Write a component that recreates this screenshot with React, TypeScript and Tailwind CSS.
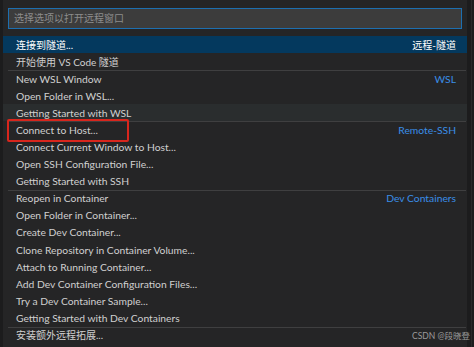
import React from "react";

type Row = { label: string; desc?: string; sep?: boolean; active?: boolean; hover?: boolean; cjk?: boolean };

const rows: Row[] = [
  { label: "连接到隧道...", desc: "远程-隧道", active: true, cjk: true },
  { label: "开始使用 VS Code 隧道", cjk: true },
  { label: "New WSL Window", desc: "WSL", sep: true },
  { label: "Open Folder in WSL..." },
  { label: "Getting Started with WSL", hover: true },
  { label: "Connect to Host...", desc: "Remote-SSH", sep: true },
  { label: "Connect Current Window to Host..." },
  { label: "Open SSH Configuration File..." },
  { label: "Getting Started with SSH" },
  { label: "Reopen in Container", desc: "Dev Containers", sep: true },
  { label: "Open Folder in Container..." },
  { label: "Create Dev Container..." },
  { label: "Clone Repository in Container Volume..." },
  { label: "Attach to Running Container..." },
  { label: "Add Dev Container Configuration Files..." },
  { label: "Try a Dev Container Sample..." },
  { label: "Getting Started with Dev Containers" },
  { label: "安装额外远程拓展...", sep: true, cjk: true },
];

const font = { fontFamily: 'Lato, "Noto Sans CJK SC", sans-serif' };

export default function App() {
  return (
    <div
      className="relative w-[474px] h-[347px] bg-[#1c1c1d] overflow-hidden flex"
      style={font}
    >
      <div className="ml-[3px] w-[464px] h-full bg-[#252526] flex flex-col">
        <div className="px-[5px] pt-[8px]">
          <div className="h-[21px] border border-[#1d6fb0] bg-[#3c3c3c] flex items-center pl-[5px] text-[10px] text-[#8c8c8c]">
            选择选项以打开远程窗口
          </div>
        </div>
        <div className="mt-[7px] flex flex-col">
          {rows.map((r, i) => (
            <div
              key={i}
              className={
                "relative h-[17.1px] flex items-center justify-between pl-[13px] pr-[11px] text-[10.3px] leading-none " +
                (r.active
                  ? "bg-[#04395e] text-white"
                  : r.hover
                  ? "bg-[#2a2d2e] text-[#d0d0d0]"
                  : "text-[#d0d0d0]")
              }
            >
              {r.sep && (
                <div className="absolute top-0 left-[5px] right-[1px] h-px bg-[#3f3f40]" />
              )}
              <span className={r.cjk ? "text-[10px]" : ""}>{r.label}</span>
              {r.desc && (
                <span className={r.active ? "text-white text-[10px]" : "text-[#3a8ee6]"}>{r.desc}</span>
              )}
            </div>
          ))}
        </div>
      </div>
      <div className="absolute left-[471px] top-0 w-px h-full bg-[#29292a]" />
      <div className="absolute left-[7px] top-[119px] w-[122px] h-[23px] border-2 border-[#d8261d] rounded-[2px]" />
      <div className="absolute right-[4px] bottom-[7px] text-[8.5px] text-[#9b9b9b] leading-none">
        CSDN @段晓登
      </div>
    </div>
  );
}
